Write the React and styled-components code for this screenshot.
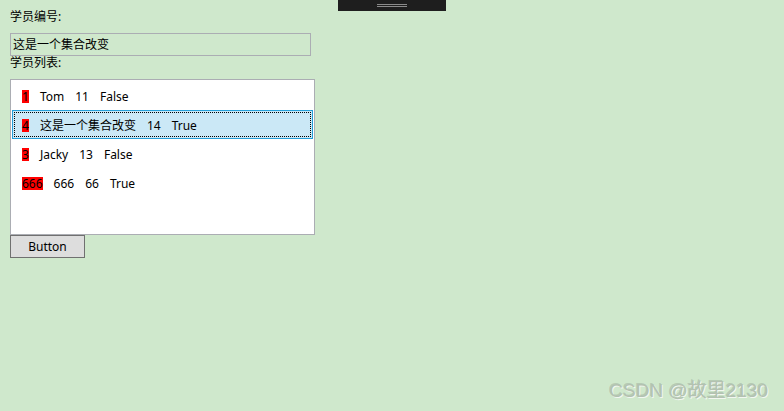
import React from 'react';
import styled, { createGlobalStyle } from 'styled-components';

const GlobalStyle = createGlobalStyle`
  html, body {
    margin: 0;
    padding: 0;
    background-color: #cfe8cc;
  }
  body {
    font-family: "Noto Sans", "Noto Sans CJK SC", sans-serif;
    font-size: 12px;
    color: #000;
  }
`;

const Window = styled.div`
  position: relative;
  width: 784px;
  height: 411px;
  overflow: hidden;
  background-color: #cfe8cc;
`;

const Form = styled.div`
  display: flex;
  flex-direction: column;
  align-items: flex-start;
  padding: 10px 0 0 10px;
`;

const Label = styled.div`
  height: 14px;
  line-height: 14px;
  margin-bottom: ${(p) => p.$gap}px;
`;

const TextBox = styled.div`
  box-sizing: border-box;
  width: 301px;
  height: 23px;
  border: 1px solid #abadb3;
  padding: 0 2px;
  line-height: 21px;
`;

const ListBox = styled.div`
  box-sizing: border-box;
  width: 305px;
  height: 156px;
  border: 1px solid #abadb3;
  background-color: #fff;
  padding: 1px;
  display: flex;
  flex-direction: column;
`;

const Item = styled.div`
  position: relative;
  box-sizing: border-box;
  height: 29px;
  display: flex;
  align-items: center;
  padding: 1px 0 0 9px;
  border: 1px solid ${(p) => (p.$selected ? '#26a0da' : 'transparent')};
  background-color: ${(p) => (p.$selected ? '#cbe8f6' : 'transparent')};

  &::after {
    content: '';
    display: ${(p) => (p.$selected ? 'block' : 'none')};
    position: absolute;
    inset: 1px;
    border: 1px dotted #000;
  }
`;

const Id = styled.span`
  background-color: #ff0000;
  line-height: 13px;
`;

const Cell = styled.span`
  margin-left: 11px;
  line-height: 13px;
`;

const Button = styled.button`
  box-sizing: border-box;
  width: 75px;
  height: 23px;
  margin: 0;
  padding: 0;
  border: 1px solid #707070;
  background-color: #dddddd;
  font-family: "Noto Sans", "Noto Sans CJK SC", sans-serif;
  font-size: 12px;
  color: #000;
`;

const DebugBar = styled.div`
  position: absolute;
  top: 0;
  left: 338px;
  width: 108px;
  height: 11px;
  background-color: #1e1e1e;
  display: flex;
  flex-direction: column;
  align-items: center;
  justify-content: center;
  gap: 1px;
`;

const Grip = styled.div`
  width: 30px;
  height: 1px;
  background-color: #8a8a8a;
`;

const Watermark = styled.div`
  position: absolute;
  right: 16px;
  bottom: 9px;
  font-family: "Liberation Sans", "Noto Sans CJK SC", sans-serif;
  font-size: 19px;
  color: #b3c2b1;
  text-shadow: 1px 1px 0 #f2f7f1, -1px -1px 0 rgba(120, 130, 120, 0.3);
`;

const students = [
  { id: '1', name: 'Tom', age: 11, flag: 'False' },
  { id: '4', name: '这是一个集合改变', age: 14, flag: 'True', selected: true },
  { id: '3', name: 'Jacky', age: 13, flag: 'False' },
  { id: '666', name: '666', age: 66, flag: 'True' },
];

const App = () => {
  return (
    <Window>
      <GlobalStyle />
      <Form>
        <Label $gap={9}>学员编号:</Label>
        <TextBox>这是一个集合改变</TextBox>
        <Label $gap={9}>学员列表:</Label>
        <ListBox>
          {students.map((s) => (
            <Item key={s.id} $selected={s.selected}>
              <Id>{s.id}</Id>
              <Cell>{s.name}</Cell>
              <Cell>{s.age}</Cell>
              <Cell>{s.flag}</Cell>
            </Item>
          ))}
        </ListBox>
        <Button>Button</Button>
      </Form>
      <DebugBar>
        <Grip />
        <Grip />
      </DebugBar>
      <Watermark>CSDN @故里2130</Watermark>
    </Window>
  );
};

export default App;
